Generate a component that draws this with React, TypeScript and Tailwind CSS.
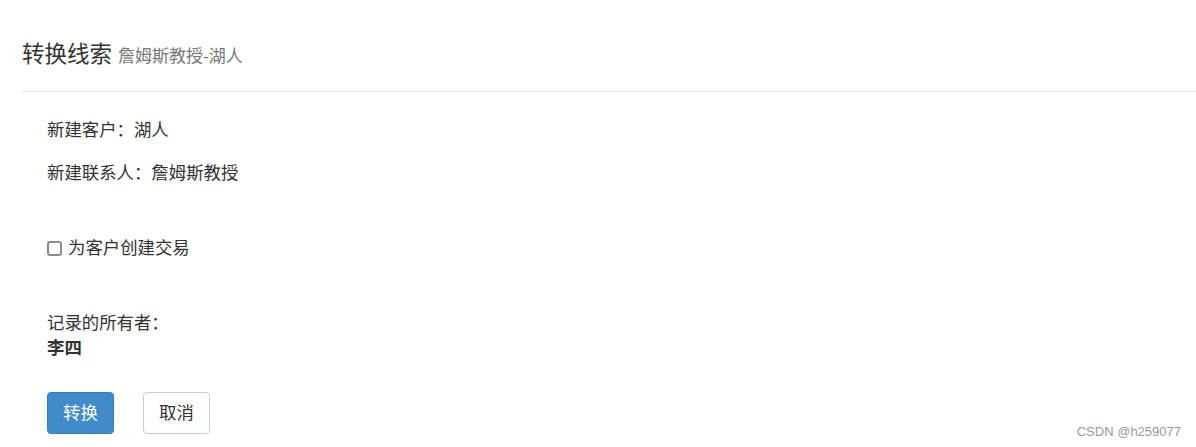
import React from "react";

export default function App() {
  const font = { fontFamily: '"Liberation Sans", "Noto Sans CJK SC", sans-serif' };
  return (
    <div className="relative w-[1196px] h-[447px] bg-white text-[#333] overflow-hidden" style={font}>
      <div className="pl-[22px]">
        <div className="pt-[42px] h-[67px] leading-[25px] flex items-baseline">
          <span className="text-[22.5px]">转换线索</span>
          <span className="ml-[6px] text-[17px] text-[#777]">詹姆斯教授-湖人</span>
        </div>
        <div className="mt-[24px] border-t border-[#eeeeee]" />
        <div className="pl-[25px] text-[17.4px]">
          <div className="mt-[26px] h-[25px] leading-[25px]">新建客户：湖人</div>
          <div className="mt-[18px] h-[25px] leading-[25px]">新建联系人：詹姆斯教授</div>
          <div className="mt-[50px] h-[25px] leading-[25px] flex items-center">
            <span className="w-[15px] h-[15px] border-2 border-[#8a8a8f] rounded-[3px] box-border" />
            <span className="ml-[6px]">为客户创建交易</span>
          </div>
          <div className="mt-[50px] h-[25px] leading-[25px]">记录的所有者：</div>
          <div className="h-[25px] leading-[25px] font-bold">李四</div>
          <div className="mt-[31px] flex gap-[29px]">
            <button className="w-[67px] h-[42px] rounded-[4px] bg-[#428bca] border border-[#357ebd] text-white text-[17.4px]">
              转换
            </button>
            <button className="w-[67px] h-[42px] rounded-[4px] bg-white border border-[#cccccc] text-[#333] text-[17.4px]">
              取消
            </button>
          </div>
        </div>
      </div>
      <div className="absolute right-[15px] bottom-[6px] text-[13px] text-[#999]">CSDN @h259077</div>
    </div>
  );
}
